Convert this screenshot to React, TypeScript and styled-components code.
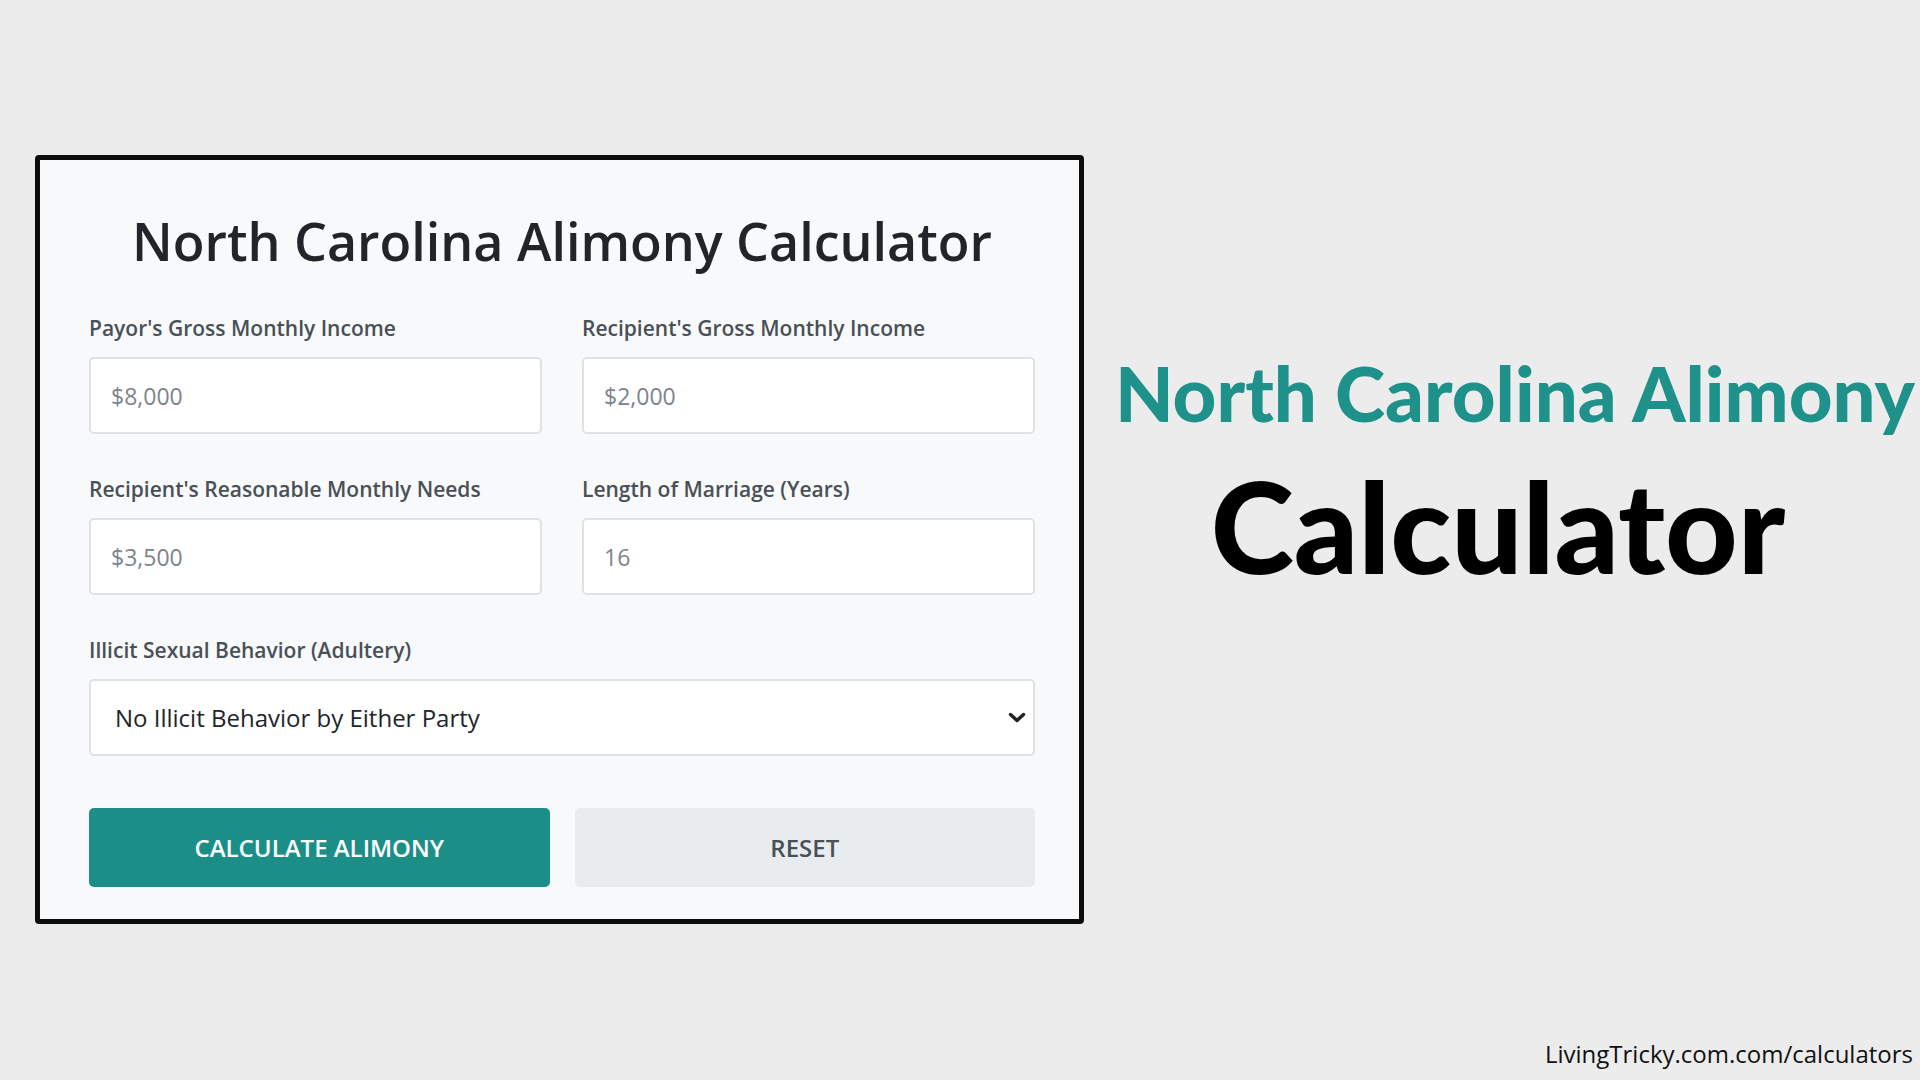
import React from "react";
import styled, { createGlobalStyle } from "styled-components";

const GlobalStyle = createGlobalStyle`
  html, body {
    margin: 0;
    padding: 0;
    background: #ececec;
  }
  * {
    box-sizing: border-box;
  }
`;

const Page = styled.div`
  width: 1920px;
  height: 1080px;
  display: flex;
  flex-direction: column;
  background: #ececec;
  font-family: "Open Sans", "Noto Sans", sans-serif;
  overflow: hidden;
`;

const Main = styled.div`
  display: flex;
  align-items: flex-start;
  padding: 155px 0 0 35px;
`;

const Card = styled.div`
  width: 1049px;
  height: 769px;
  background: #f8f9fa;
  border: 5px solid #0d0d0d;
  border-radius: 4px;
  padding: 0 44px 0 49px;
  display: flex;
  flex-direction: column;
`;

const Title = styled.h1`
  margin: 48px 0 40px;
  text-align: center;
  font-size: 52px;
  font-weight: 600;
  line-height: 1.25;
  color: #212529;
`;

const Grid = styled.div`
  display: grid;
  grid-template-columns: 1fr 1fr;
  column-gap: 40px;
  row-gap: 40px;
`;

const Field = styled.div<{ $full?: boolean }>`
  display: flex;
  flex-direction: column;
  gap: 14px;
  grid-column: ${(p) => (p.$full ? "1 / -1" : "auto")};
`;

const Label = styled.label`
  font-size: 21px;
  font-weight: 600;
  color: #495057;
  line-height: 30px;
`;

const Input = styled.input`
  height: 77px;
  width: 100%;
  padding: 0 20px;
  background: #fff;
  border: 2px solid #dfe1e4;
  border-radius: 5px;
  font-family: inherit;
  font-size: 23px;
  color: #6c757d;
  outline: none;

  &::placeholder {
    color: #7d848b;
  }
`;

const SelectWrap = styled.div`
  position: relative;
`;

const Select = styled.select`
  appearance: none;
  width: 100%;
  height: 77px;
  padding: 0 60px 0 24px;
  background: #fff;
  border: 2px solid #dfe1e4;
  border-radius: 5px;
  font-family: inherit;
  font-size: 24px;
  color: #212529;
  outline: none;
`;

const Chevron = styled.svg`
  position: absolute;
  right: 9px;
  top: 50%;
  transform: translateY(-50%);
  pointer-events: none;
`;

const Buttons = styled.div`
  display: flex;
  gap: 25px;
  margin-top: 52px;
`;

const Button = styled.button<{ $primary?: boolean }>`
  flex: 1;
  height: 79px;
  border: none;
  border-radius: 5px;
  font-family: inherit;
  font-size: 24px;
  font-weight: 600;
  text-transform: uppercase;
  cursor: pointer;
  background: ${(p) => (p.$primary ? "#1b8f87" : "#e9ecef")};
  color: ${(p) => (p.$primary ? "#ffffff" : "#495057")};
`;

const Side = styled.div`
  flex: 1;
  display: flex;
  flex-direction: column;
  align-items: center;
  padding: 200px 0 0 26px;
`;

const Headline = styled.div`
  font-family: Lato, "Open Sans", sans-serif;
  font-size: 76px;
  font-weight: 900;
  line-height: 1;
  color: #1e918a;
  white-space: nowrap;
`;

const BigWord = styled.div`
  margin-top: 32px;
  margin-right: 34px;
  font-family: Lato, "Open Sans", sans-serif;
  font-size: 126px;
  font-weight: 900;
  line-height: 1;
  color: #000;
`;

const Footer = styled.div`
  margin-top: auto;
  padding: 0 7px 10px 0;
  text-align: right;
  font-size: 24px;
  color: #111;
`;

export default function App() {
  return (
    <>
      <GlobalStyle />
      <Page>
        <Main>
          <Card>
            <Title>North Carolina Alimony Calculator</Title>
            <Grid>
              <Field>
                <Label>Payor's Gross Monthly Income</Label>
                <Input placeholder="$8,000" />
              </Field>
              <Field>
                <Label>Recipient's Gross Monthly Income</Label>
                <Input placeholder="$2,000" />
              </Field>
              <Field>
                <Label>Recipient's Reasonable Monthly Needs</Label>
                <Input placeholder="$3,500" />
              </Field>
              <Field>
                <Label>Length of Marriage (Years)</Label>
                <Input placeholder="16" />
              </Field>
              <Field $full>
                <Label>Illicit Sexual Behavior (Adultery)</Label>
                <SelectWrap>
                  <Select defaultValue="none">
                    <option value="none">No Illicit Behavior by Either Party</option>
                    <option value="payor">Payor Engaged in Illicit Behavior</option>
                    <option value="recipient">Recipient Engaged in Illicit Behavior</option>
                  </Select>
                  <Chevron width="18" height="12" viewBox="0 0 18 12">
                    <path
                      d="M2.5 2.5 L9 8.5 L15.5 2.5"
                      fill="none"
                      stroke="#222"
                      strokeWidth="3.4"
                      strokeLinecap="round"
                      strokeLinejoin="round"
                    />
                  </Chevron>
                </SelectWrap>
              </Field>
            </Grid>
            <Buttons>
              <Button $primary>Calculate Alimony</Button>
              <Button>Reset</Button>
            </Buttons>
          </Card>
          <Side>
            <Headline>North Carolina Alimony</Headline>
            <BigWord>Calculator</BigWord>
          </Side>
        </Main>
        <Footer>LivingTricky.com.com/calculators</Footer>
      </Page>
    </>
  );
}
